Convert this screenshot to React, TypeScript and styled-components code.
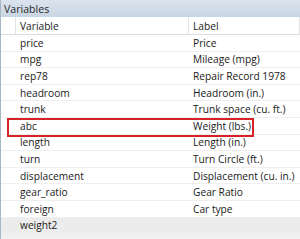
import React from 'react';
import styled, { createGlobalStyle } from 'styled-components';

const GlobalStyle = createGlobalStyle`
  html, body { margin: 0; padding: 0; background: #ffffff; }
  body { font-family: "Open Sans", "Noto Sans", sans-serif; }
`;

interface VarRow {
  name: string;
  label: string;
}

const rows: VarRow[] = [
  { name: 'price', label: 'Price' },
  { name: 'mpg', label: 'Mileage (mpg)' },
  { name: 'rep78', label: 'Repair Record 1978' },
  { name: 'headroom', label: 'Headroom (in.)' },
  { name: 'trunk', label: 'Trunk space (cu. ft.)' },
  { name: 'abc', label: 'Weight (lbs.)' },
  { name: 'length', label: 'Length (in.)' },
  { name: 'turn', label: 'Turn Circle (ft.)' },
  { name: 'displacement', label: 'Displacement (cu. in.)' },
  { name: 'gear_ratio', label: 'Gear Ratio' },
  { name: 'foreign', label: 'Car type' },
  { name: 'weight2', label: '' },
];

const Panel = styled.div`
  width: 300px;
  height: 239px;
  overflow: hidden;
  background: #f0f0f0;
  color: #1a1a1a;
  font-size: 10.2px;
  border-left: 1px solid #a9b6c4;
  box-sizing: border-box;
`;

const TitleBar = styled.div`
  height: 17px;
  display: flex;
  align-items: center;
  padding-left: 3px;
  background: linear-gradient(#dbe4ee, #c8d5e2);
  color: #2b2b2b;
  font-size: 10.6px;
`;

const Grid = styled.div`
  display: grid;
  grid-template-columns: 15px 173px 1fr;
  background: #ffffff;
`;

const HeadCell = styled.div`
  height: 18px;
  display: flex;
  align-items: center;
  padding-left: 4px;
  border-right: 1px solid #e3e3e3;
  border-bottom: 1px solid #dcdcdc;
  background: #ffffff;
  box-sizing: border-box;
  &:last-child { border-right: none; }
`;

const Row = styled.div<{ $selected?: boolean; $boxed?: boolean }>`
  display: contents;
  & > div {
    background: ${(p) => (p.$selected ? '#ececec' : '#ffffff')};
  }
  & > div:nth-child(2) {
    position: relative;
  }
  & > div:nth-child(2)::after {
    content: '';
    display: ${(p) => (p.$boxed ? 'block' : 'none')};
    position: absolute;
    left: -9px;
    top: 0px;
    width: 247px;
    bottom: -3px;
    border: 2px solid #d7222a;
    box-sizing: border-box;
    pointer-events: none;
    z-index: 2;
  }
`;

const Cell = styled.div`
  height: 16.6px;
  display: flex;
  align-items: center;
  padding-left: 4px;
  border-bottom: 1px solid #efefef;
  box-sizing: border-box;
  white-space: nowrap;
`;

const Filler = styled.div`
  height: 20px;
  background: #f0f0f0;
`;

export default function App() {
  return (
    <>
      <GlobalStyle />
      <Panel>
        <TitleBar>Variables</TitleBar>
        <Grid>
          <HeadCell />
          <HeadCell>Variable</HeadCell>
          <HeadCell>Label</HeadCell>
          {rows.map((r) => (
            <Row key={r.name} $selected={r.name === 'weight2'} $boxed={r.name === 'abc'}>
              <Cell />
              <Cell>{r.name}</Cell>
              <Cell>{r.label}</Cell>
            </Row>
          ))}
        </Grid>
        <Filler />
      </Panel>
    </>
  );
}
